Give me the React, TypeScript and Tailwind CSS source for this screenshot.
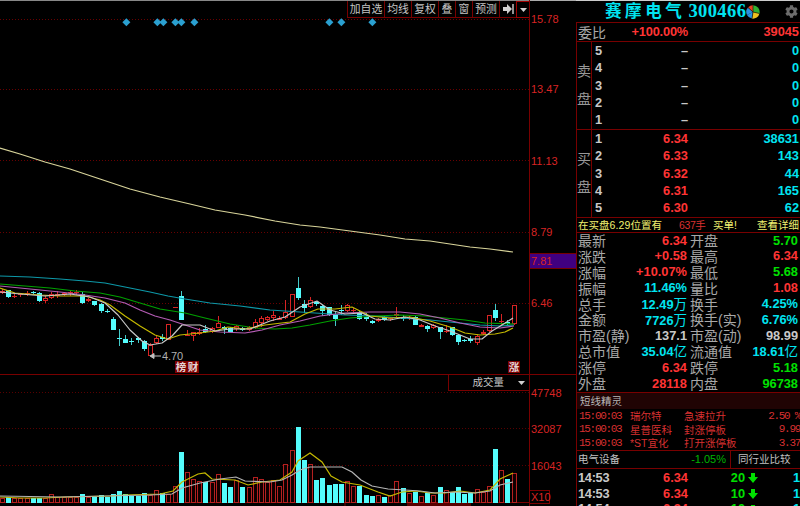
import { FaCog } from "react-icons/fa";
import type { ReactNode } from "react";

// [up = 1 / down = 0, body top, body bottom, high, low, volume top]
const candles: number[][] = [
  [1, 291, 293, 289, 294, 498],
  [0, 290, 297, 290, 298, 497],
  [1, 296, 297, 294, 298, 498],
  [1, 294, 295, 293, 297, 498],
  [1, 293, 294, 291, 296, 498],
  [0, 292, 293, 291, 295, 498],
  [0, 293, 301, 292, 302, 498],
  [1, 298, 301, 296, 303, 498],
  [1, 294, 298, 292, 299, 494],
  [1, 294, 296, 291, 298, 497],
  [1, 293, 295, 292, 296, 497],
  [1, 292, 293, 290, 296, 497],
  [1, 292, 293, 290, 295, 497],
  [0, 294, 303, 292, 304, 494],
  [1, 299, 301, 298, 302, 497],
  [0, 301, 305, 301, 306, 497],
  [0, 304, 311, 303, 313, 495],
  [0, 311, 312, 309, 313, 497],
  [0, 319, 330, 317, 330, 494],
  [0, 338, 339, 329, 346, 491],
  [0, 339, 343, 335, 343, 494],
  [0, 341, 342, 338, 345, 496],
  [0, 338, 340, 337, 343, 496],
  [0, 341, 349, 340, 351, 493],
  [1, 345, 356, 343, 356, 495],
  [1, 338, 343, 336, 344, 490],
  [0, 337, 339, 334, 341, 493],
  [1, 324, 340, 324, 340, 494],
  [1, 307, 308, 307, 308, 486],
  [0, 296, 320, 291, 320, 452],
  [1, 335, 336, 330, 336, 472],
  [1, 332, 336, 332, 341, 479],
  [1, 332, 334, 328, 335, 481],
  [0, 329, 332, 325, 333, 482],
  [1, 328, 332, 327, 333, 482],
  [1, 323, 328, 316, 328, 474],
  [0, 327, 329, 326, 334, 483],
  [0, 328, 332, 327, 332, 487],
  [1, 326, 329, 325, 331, 480],
  [0, 328, 330, 327, 331, 487],
  [1, 327, 330, 326, 331, 487],
  [1, 322, 328, 319, 329, 477],
  [1, 318, 323, 316, 327, 479],
  [1, 317, 320, 316, 321, 482],
  [1, 315, 318, 311, 321, 480],
  [1, 318, 320, 316, 320, 486],
  [1, 312, 318, 300, 319, 464],
  [1, 294, 317, 294, 317, 450],
  [0, 288, 298, 277, 300, 427],
  [0, 304, 308, 300, 313, 460],
  [1, 300, 307, 297, 308, 464],
  [0, 302, 304, 301, 306, 480],
  [0, 306, 311, 305, 316, 478],
  [0, 307, 315, 307, 316, 485],
  [0, 314, 319, 312, 326, 484],
  [0, 310, 311, 305, 315, 484],
  [1, 305, 311, 304, 312, 481],
  [1, 310, 311, 308, 313, 486],
  [0, 312, 319, 311, 320, 486],
  [0, 317, 319, 313, 321, 495],
  [0, 321, 323, 320, 324, 496],
  [1, 319, 321, 318, 322, 495],
  [0, 317, 320, 316, 321, 497],
  [1, 318, 319, 317, 321, 495],
  [1, 314, 316, 307, 318, 481],
  [0, 317, 319, 315, 321, 488],
  [1, 318, 319, 316, 320, 493],
  [0, 317, 325, 316, 325, 492],
  [1, 325, 327, 324, 327, 496],
  [0, 326, 329, 325, 332, 493],
  [1, 325, 328, 324, 329, 495],
  [0, 327, 332, 327, 339, 487],
  [1, 331, 332, 325, 333, 490],
  [0, 327, 335, 327, 336, 492],
  [0, 335, 342, 334, 345, 487],
  [0, 340, 341, 339, 342, 494],
  [0, 339, 341, 336, 343, 493],
  [1, 336, 343, 334, 345, 489],
  [1, 332, 334, 330, 335, 492],
  [1, 315, 331, 315, 332, 486],
  [0, 310, 318, 304, 321, 449],
  [1, 321, 322, 314, 325, 470],
  [0, 322, 324, 320, 326, 479],
  [1, 305, 324, 305, 325, 473],
];

const xAt = (i: number) => Math.round(2 + i * 6.163);

const priceLines = [
  { color: "#d8d49a", points: "0,148 20,154 45,162 70,169 100,179 130,189 160,197 190,204 215,210 245,215 275,221 300,225 320,227 350,231 380,235 405,239 430,241 450,244 470,247 490,249 513,252" },
  { color: "#0d98a8", points: "0,276 30,277 60,279 85,281 105,283 130,288 150,292 168,296 185,299 210,303 240,306 270,310 300,312 330,314 345,315 375,316 400,318 430,320 460,323 480,325 500,326 514,325" },
  { color: "#00a000", points: "0,284 25,286 50,288 75,291 100,293 120,297 140,303 160,309 185,313 205,318 230,324 255,328 275,329 292,328 310,325 330,321 350,318 375,316 400,315 425,316 445,318 465,320 485,323 514,324" },
  { color: "#b45cb4", points: "0,286 30,289 60,292 85,295 105,298 125,303 140,310 155,316 170,320 185,325 200,330 220,332 245,333 262,330 280,325 300,321 320,316 345,313 370,312 400,312 420,314 440,318 460,323 480,327 500,328 514,326" },
  { color: "#c4b800", points: "0,288 15,293 40,295 60,296 85,296 100,300 110,305 125,316 140,326 155,335 168,339 180,335 200,333 215,331 228,327 245,329 265,325 290,322 305,314 318,309 335,309 352,307 370,316 390,318 410,317 430,321 450,327 465,333 480,335 495,334 505,332 513,328" },
  { color: "#c8c8c8", points: "0,292 20,294 45,296 70,294 90,297 105,303 118,315 130,330 142,341 150,345 162,343 172,336 182,325 200,325 215,331 230,329 250,329 270,321 285,317 300,307 317,301 330,310 345,314 362,313 375,319 390,320 405,317 420,320 435,326 450,331 460,335 470,339 482,339 492,331 502,325 513,318" },
];

const volumeLines = [
  { color: "#c4b800", points: "0,497 20,498 45,498 65,497 110,496 125,495 160,494 173,491 182,482 198,474 205,473 212,479 235,480 248,485 262,482 280,480 292,472 298,461 310,453 322,462 331,476 342,482 360,485 378,492 390,496 402,492 416,491 430,493 445,493 460,491 475,493 490,490 500,479 513,473" },
  { color: "#b4b4b4", points: "0,496 60,497 105,496 150,495 172,494 182,488 200,483 220,479 236,477 245,481 270,482 282,480 292,475 300,470 310,467 342,467 352,472 361,480 372,486 388,489 405,490 420,491 435,493 455,492 475,493 490,491 500,485 513,482" },
];

const diamonds = [126, 157, 163, 175, 181, 194, 329, 341, 372];

const tools = [
  { label: "加自选", box: "w-[37px]" },
  { label: "均线", box: "w-[27px]" },
  { label: "复权", box: "w-[27px]" },
  { label: "叠", box: "w-[17px]" },
  { label: "窗", box: "w-[17px]" },
  { label: "预测", box: "w-[27px]" },
];

const buys = [
  ["1", "6.34", "38631"],
  ["2", "6.33", "143"],
  ["3", "6.32", "44"],
  ["4", "6.31", "165"],
  ["5", "6.30", "62"],
];
const sells = ["5", "4", "3", "2", "1"].map((n) => [n, "–", "0"]);

const R = "text-[#ff3434]";
const G = "text-[#00e000]";
const C = "text-[#00e4f0]";
const W = "text-[#c8c8c8]";

const stats = [
  ["最新", "6.34", R, "开盘", "5.70", G],
  ["涨跌", "+0.58", R, "最高", "6.34", R],
  ["涨幅", "+10.07%", R, "最低", "5.68", G],
  ["振幅", "11.46%", C, "量比", "1.08", R],
  ["总手", "12.49万", C, "换手", "4.25%", C],
  ["金额", "7726万", C, "换手(实)", "6.76%", C],
  ["市盈(静)", "137.1", W, "市盈(动)", "98.99", W],
  ["总市值", "35.04亿", C, "流通值", "18.61亿", C],
  ["涨停", "6.34", R, "跌停", "5.18", G],
  ["外盘", "28118", R, "内盘", "96738", G],
];

const alerts = [
  ["15:00:03", "瑞尔特", "急速拉升", "2.50 %"],
  ["15:00:03", "星普医科", "封涨停板", "9.99"],
  ["15:00:03", "*ST宜化", "打开涨停板", "3.37"],
];

const ticks = [
  ["14:53", "6.34", "20", "1"],
  ["14:53", "6.34", "10", "1"],
  ["14:54", "6.34", "10", "1"],
];

function Caret() {
  return (
    <svg width="7" height="4" viewBox="0 0 7 4">
      <path d="M0 0h7L3.5 4z" fill="#d0d0d0" />
    </svg>
  );
}

function Toolbar() {
  return (
    <div className="flex h-[18px] shrink-0 justify-end border-t border-[#888]">
      {tools.map((t) => (
        <div key={t.label} className={`${t.box} flex shrink-0 items-center justify-center border-b border-l border-[#780000] pt-px text-[10.8px] text-[#c4c4c4]`}>
          <span className="whitespace-nowrap">{t.label}</span>
        </div>
      ))}
      <div className="flex w-[17px] items-center justify-center border-b border-l border-[#780000]">
        <svg width="11" height="10" viewBox="0 0 11 10">
          <path d="M0 3h4V0l5 5-5 5V7H0z" fill="#d0d0d0" />
          <path d="M10 0v10" stroke="#d0d0d0" strokeWidth="1.4" />
        </svg>
      </div>
      <div className="flex w-[13px] items-center justify-center border border-r-0 border-[#a00000]">
        <Caret />
      </div>
    </div>
  );
}

function Tag({ x, children }: { x: number; children: string }) {
  return (
    <g>
      <rect x={x} y="361" width="12" height="12" fill="#7c0000" />
      <text x={x + 6} y="371" textAnchor="middle" fontSize="10.5" fontWeight="700" fill="#e4d4d4">{children}</text>
    </g>
  );
}

function PriceChart() {
  return (
    <svg className="block shrink-0" width="529" height="356" viewBox="0 18 529 356">
      {[19, 89, 160, 232, 303].map((y) => (
        <path key={y} d={`M0 ${y + 0.5}H529`} stroke="#680000" strokeDasharray="1 2" />
      ))}
      {diamonds.map((x) => (
        <path key={x} d={`M${x + 0.4} 18.3l4 4-4 4-4-4z`} fill="#2aa0d0" />
      ))}
      {candles.map(([up, top, bottom, high, low], i) => {
        const x = xAt(i);
        const tall = bottom - top > 2;
        if (!up) {
          return (
            <g key={i} fill="#54fcfc">
              <rect x={x} y={high} width="1" height={low - high} fillOpacity="0.8" />
              <rect x={x - 2} y={top} width="5" height={Math.max(1, bottom - top)} />
            </g>
          );
        }
        return (
          <g key={i}>
            <path d={`M${x + 0.5} ${high}V${top}M${x + 0.5} ${bottom}V${low}`} stroke="#d82424" />
            {tall ? (
              <rect x={x - 1.5} y={top + 0.5} width="4" height={bottom - top - 1} fill="#000" stroke="#d82424" />
            ) : (
              <rect x={x - 2} y={top} width="5" height={bottom - top} fill="#d82424" />
            )}
          </g>
        );
      })}
      {priceLines.map((l) => (
        <polyline key={l.color} points={l.points} fill="none" stroke={l.color} strokeWidth="1.2" strokeLinejoin="round" />
      ))}
      <path d="M151 356h10M150 356l4-2.5v5z" stroke="#c0c0c0" fill="#c0c0c0" />
      <text x="162" y="360" fontSize="11" textLength="21" fill="#b0b0b0">4.70</text>
      <Tag x={175}>榜</Tag>
      <Tag x={187}>财</Tag>
      <Tag x={508}>涨</Tag>
    </svg>
  );
}

function VolumeChart() {
  return (
    <svg className="block shrink-0" width="529" height="115" viewBox="0 391 529 115">
      {[392, 428, 465].map((y) => (
        <path key={y} d={`M0 ${y + 0.5}H529`} stroke="#580000" strokeDasharray="1 2" />
      ))}
      <path d="M0 502.5H529M345 502v4" stroke="#780000" />
      <rect x="407" y="503" width="64" height="3" fill="#580000" />
      {candles.map((c, i) =>
        c[0] ? (
          <rect key={i} x={xAt(i) - 1.5} y={c[5] + 0.5} width="4" height={502 - c[5]} fill="#100000" stroke="#b42020" />
        ) : (
          <rect key={i} x={xAt(i) - 2} y={c[5]} width="5" height={503 - c[5]} fill="#54fcfc" />
        )
      )}
      {volumeLines.map((l) => (
        <polyline key={l.color} points={l.points} fill="none" stroke={l.color} strokeWidth="1.2" />
      ))}
    </svg>
  );
}

function Axis() {
  return (
    <div className="flex w-[46px] shrink-0 flex-col border-t border-[#aaa] text-[11px] leading-4 text-[#d82424]">
      <div className="flex h-[374px] flex-col border-b border-[#780000] *:shrink-0">
        <span className="mt-[10px] pl-px">15.78</span>
        <span className="mt-[54px] pl-px">13.47</span>
        <span className="mt-[56px] pl-px">11.13</span>
        <span className="mt-[55px] pl-px">8.79</span>
        <span className="mt-[13px] h-4 border-y border-[#780000] bg-[#400080] pl-px leading-[14px]">7.81</span>
        <span className="mt-[26px] pl-px">6.46</span>
      </div>
      <span className="mt-[10px] pl-px">47748</span>
      <span className="mt-[20px] pl-px">32087</span>
      <span className="mt-[21px] pl-px">16043</span>
      <span className="mt-[16px] h-[14px] w-5 border border-l-0 border-[#780000] pl-px leading-[12px]">X10</span>
    </div>
  );
}

function Book({ rows, side, price, first }: { rows: string[][]; side: string; price: string; first: string }) {
  return (
    <div className="flex h-[88px] shrink-0 border-b border-[#780000]">
      <div className={`flex w-[15px] shrink-0 flex-col border-r border-[#780000] text-[14px] leading-[28px] text-[#989898] ${first}`}>
        <span>{side}</span>
        <span>盘</span>
      </div>
      <div className="grid flex-1 grid-rows-5 pt-px text-[12.8px] font-bold">
        {rows.map(([n, p, v]) => (
          <div key={n} className="flex items-center leading-none">
            <span className={`w-[30px] pl-[3px] ${W}`}>{n}</span>
            <span className={`w-[66px] text-right ${price}`}>{p}</span>
            <span className={`flex-1 pr-px text-right ${C}`}>{v}</span>
          </div>
        ))}
      </div>
    </div>
  );
}

// the 万 / 亿 unit is set lighter than the digits
function Value({ children }: { children: string }) {
  const unit = /[万亿]$/.test(children) ? children.slice(-1) : "";
  return (
    <>
      {unit ? children.slice(0, -1) : children}
      {unit && <span className="text-[13.5px] font-normal">{unit}</span>}
    </>
  );
}

function Cell({ className, children }: { className: string; children: ReactNode }) {
  return <span className={`shrink-0 whitespace-nowrap ${className}`}>{children}</span>;
}

function QuotePanel() {
  return (
    <div className="flex w-[224px] shrink-0 flex-col border-t border-[#ccc]">
      <div className="flex h-[21px] shrink-0 items-center pl-[29px] text-[#00e4f0]">
        <span className="text-[16.5px] leading-none font-bold tracking-[3.6px]">赛摩电气</span>
        <span className="ml-[3px] font-['Liberation_Serif',serif] text-[18.5px] leading-none font-bold tracking-[0.4px]">300466</span>
        <svg className="shrink-0" width="14" height="14" viewBox="-7 -7 14 14">
          <path d="M0 0L-6 3A6.7 6.7 0 0 1 -5 -4.5z" fill="#2a90e0" />
          <path d="M0 0L-5 -4.5A6.7 6.7 0 0 1 0 -6.7z" fill="#e84020" />
          <path d="M0 0V-6.7A6.7 6.7 0 0 1 6.5 1.5z" fill="#30b030" />
          <path d="M0 0L6.5 1.5A6.7 6.7 0 0 1 -1 6.6z" fill="#f0c020" />
          <path d="M0 0L-1 6.6A6.7 6.7 0 0 1 -6 3z" fill="#2a90e0" />
          <path d="M0 -6.7V0L6.5 1.5M0 0L-1 6.6M0 0L-5 -4.5" stroke="#201808" strokeWidth="0.7" fill="none" />
        </svg>
        <FaCog className="mr-[2px] ml-auto shrink-0" size={13} color="#6c6c6c" />
      </div>

      <div className="flex flex-1 flex-col overflow-hidden border-t border-l border-[#780000]">
        <div className="flex h-[19px] shrink-0 items-center border-b border-[#780000] pt-px text-[12.8px] leading-none font-bold">
          <Cell className="w-[30px] pl-px text-[14px] font-normal text-[#a8a8a8]">委比</Cell>
          <Cell className={`w-[81px] text-right tracking-[-0.2px] ${R}`}>+100.00%</Cell>
          <Cell className={`flex-1 pr-px text-right ${R}`}>39045</Cell>
        </div>
        <Book rows={sells} side="卖" price="text-[#c8c8c8]" first="pt-[15px]" />
        <Book rows={buys} side="买" price={R} first="pt-[15px]" />

        <div className="flex h-[15px] shrink-0 items-center border-b border-[#780000] text-[10.5px] leading-none text-[#f0f070]">
          <Cell className="w-[102px] pl-px">
            在买盘<span className="tracking-[0.15px]">6.29</span>位置有
          </Cell>
          <Cell className="w-[34px] text-[#d83030]">
            <span className="tracking-[-0.4px]">637</span>手
          </Cell>
          <Cell className="">买单!</Cell>
          <Cell className="ml-auto pr-px">查看详细</Cell>
        </div>

        <div className="grid h-[160px] shrink-0 grid-rows-10 border-b border-[#780000]">
          {stats.map(([a, av, ac, b, bv, bc]) => (
            <div key={a} className="flex items-center text-[12.8px] leading-none font-bold">
              <div className="flex w-[110px] items-center justify-between pl-px">
                <Cell className="text-[14px] font-normal text-[#a8a8a8]">{a}</Cell>
                <Cell className={ac}><Value>{av}</Value></Cell>
              </div>
              <div className="ml-[3px] flex flex-1 items-center justify-between pr-[2px]">
                <Cell className="text-[14px] font-normal text-[#a8a8a8]">{b}</Cell>
                <Cell className={bc}><Value>{bv}</Value></Cell>
              </div>
            </div>
          ))}
        </div>

        <div className="flex h-4 shrink-0 items-center bg-[#200404] pl-[3px] text-[10.5px] leading-none text-[#b8b8b8]">短线精灵</div>
        <div className="grid h-[42px] shrink-0 grid-rows-3 border-b border-[#780000] pt-px text-[10.5px] leading-none text-[#d83030]">
          {alerts.map(([time, name, event, value]) => (
            <div key={name} className="flex items-center">
              <Cell className="w-[53px] pl-[2px] font-['Liberation_Mono',monospace] text-[11px] tracking-[-1.3px]">{time}</Cell>
              <Cell className="w-[54px]">{name}</Cell>
              <Cell className="">{event}</Cell>
              <Cell className="ml-auto font-['Liberation_Mono',monospace] text-[11px] tracking-[-1.3px]">{value}</Cell>
            </div>
          ))}
        </div>
        <div className="flex h-[18px] shrink-0 items-center border-b border-[#780000] text-[10.5px] leading-none text-[#c0c0c0]">
          <Cell className="pl-px">电气设备</Cell>
          <Cell className="ml-auto pr-[4px] text-[11px] text-[#00b400]">-1.05%</Cell>
          <div className="flex h-full w-[70px] items-center border-l border-[#780000] pl-[7px]">同行业比较</div>
        </div>
        {ticks.map(([time, price, qty, n], i) => (
          <div key={i} className="flex h-[15.7px] shrink-0 items-center pt-[3px] text-[12.8px] leading-none font-bold">
            <Cell className={`w-[60px] pl-px tracking-[-0.3px] ${W}`}>{time}</Cell>
            <Cell className={`w-[51px] text-right ${R}`}>{price}</Cell>
            <Cell className={`w-[57px] text-right ${G}`}>{qty}</Cell>
            <svg className="ml-[3px] shrink-0" width="10" height="10" viewBox="0 0 10 10">
              <path d="M3 0h4v4h3L5 10 0 4h3z" fill="#00e000" />
            </svg>
            <Cell className={`ml-auto ${C}`}>{n}</Cell>
          </div>
        ))}
      </div>
    </div>
  );
}

export default function App() {
  return (
    <div className="flex h-[506px] w-[800px] overflow-hidden bg-black font-['Liberation_Sans','Noto_Sans_CJK_SC',sans-serif]">
      <div className="flex w-[530px] shrink-0 flex-col border-r border-[#780000]">
        <Toolbar />
        <PriceChart />
        <div className="flex h-[17px] shrink-0 justify-end border-t border-[#780000]">
          <div className="flex w-[81px] items-center justify-end gap-[14px] border-b border-l border-[#780000] pr-[4px] text-[10.5px] leading-none text-[#c4c4c4]">
            成交量
            <Caret />
          </div>
        </div>
        <VolumeChart />
      </div>
      <Axis />
      <QuotePanel />
    </div>
  );
}
